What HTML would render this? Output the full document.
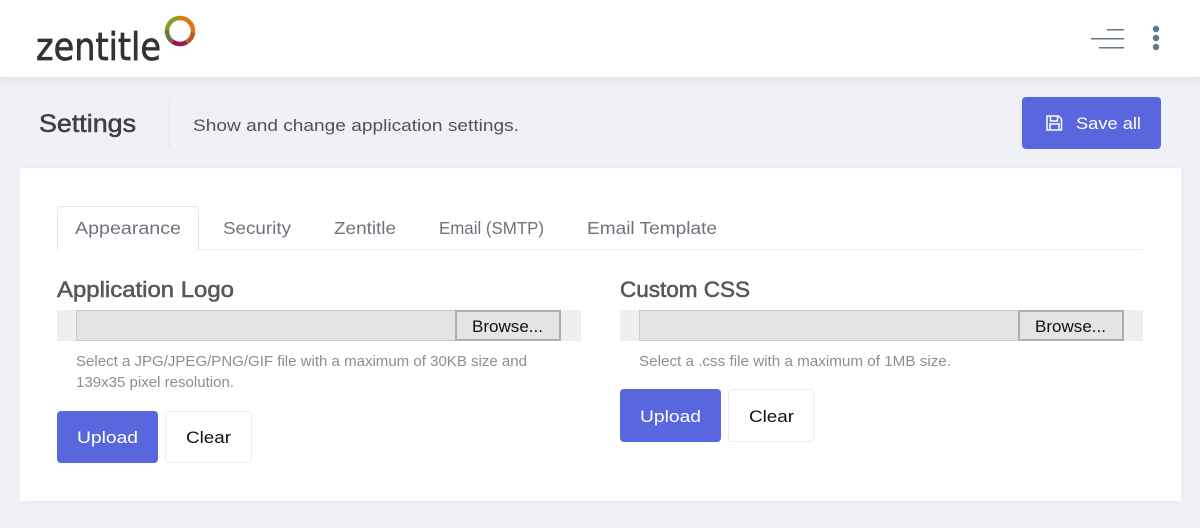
<!DOCTYPE html>
<html lang="en"><head><meta charset="utf-8"><title>Settings</title>
<style>
html,body{margin:0;padding:0;width:1200px;height:528px;overflow:hidden;background:#f0f1f7;font-family:"Liberation Sans",sans-serif}
div{position:absolute;box-sizing:border-box}
svg{position:absolute;left:0;top:0}
</style></head><body>
<div style="left:0;top:0;width:1200px;height:77px;background:#fff;box-shadow:0 1px 10px rgba(60,60,90,.13)"></div>
<div style="left:169px;top:98px;width:1px;height:50px;background:#e2e3ea"></div>
<div style="left:1022px;top:97px;width:139px;height:52px;background:#5867dd;border-radius:4px"></div>
<div style="left:20px;top:168px;width:1161px;height:333px;background:#fff;box-shadow:0 0 8px rgba(80,80,120,.04)"></div>
<div style="left:57px;top:249px;width:1086px;height:1px;background:#ebedf2"></div>
<div style="left:57px;top:206px;width:142px;height:44px;background:#fff;border:1px solid #e3e6ee;border-bottom:0;border-radius:4px 4px 0 0"></div>

<div style="left:57px;top:310px;width:524px;height:31px;background:#efefef"></div>
<div style="left:76px;top:310px;width:380px;height:31px;background:#e3e3e3;border:1px solid #c9c9c9;border-right:0"></div>
<div style="left:455px;top:310px;width:106px;height:31px;background:#e4e4e4;border:2px solid #adadad"></div>

<div style="left:620px;top:310px;width:523px;height:31px;background:#efefef"></div>
<div style="left:639px;top:310px;width:380px;height:31px;background:#e3e3e3;border:1px solid #c9c9c9;border-right:0"></div>
<div style="left:1018px;top:310px;width:106px;height:31px;background:#e4e4e4;border:2px solid #adadad"></div>

<div style="left:57px;top:411px;width:101px;height:52px;background:#5867dd;border-radius:4px"></div>
<div style="left:165px;top:411px;width:87px;height:52px;background:#fff;border:1px solid #ebedf2;border-radius:4px"></div>
<div style="left:620px;top:389px;width:101px;height:53px;background:#5867dd;border-radius:4px"></div>
<div style="left:728px;top:389px;width:86px;height:53px;background:#fff;border:1px solid #ebedf2;border-radius:4px"></div>

<svg width="1200" height="528" viewBox="0 0 1200 528" font-family="'Liberation Sans',sans-serif">
  <!-- logo -->
  <text x="36" y="60" font-family="'DejaVu Sans',sans-serif" font-size="38.500" fill="#333336" stroke="#333336" stroke-width=".7" textLength="125" lengthAdjust="spacingAndGlyphs">zentitle</text>
  <g fill="none" stroke-width="4.500">
    <path d="M167.050 29.870A13 13 0 0 1 177.740 18.200" stroke="#8f9a24"/>
    <path d="M177.740 18.200A13 13 0 0 1 192.950 32.130" stroke="#dd7c0c"/>
    <path d="M192.950 32.130A13 13 0 0 1 186.500 42.260" stroke="#bd5a1c"/>
    <path d="M186.500 42.260A13 13 0 0 1 172.540 41.650" stroke="#a3144e"/>
    <path d="M172.540 41.650A13 13 0 0 1 167.050 29.870" stroke="#66763e"/>
  </g>
  <!-- header icons -->
  <g fill="#62768a">
    <rect x="1107" y="29" width="17" height="1.500"/>
    <rect x="1091" y="38" width="33" height="1.500"/>
    <rect x="1099" y="47" width="25" height="1.500"/>
  </g>
  <g fill="#5f7890">
    <circle cx="1156" cy="29" r="3.200"/>
    <circle cx="1156" cy="38" r="3.200"/>
    <circle cx="1156" cy="47" r="3.200"/>
  </g>
  <!-- page heading -->
  <text x="39" y="132" font-size="25" fill="#3f4047" stroke="#3f4047" stroke-width=".55" textLength="97" lengthAdjust="spacingAndGlyphs">Settings</text>
  <text x="193" y="131" font-size="17" fill="#50505e" textLength="326" lengthAdjust="spacingAndGlyphs">Show and change application settings.</text>
  <!-- save -->
  <path d="M1047 116h11.500l3 3v11h-14.500zM1050.500 116.500v4.500h7v-4.500M1050 130v-6h9v6" fill="none" stroke="#fff" stroke-width="1.500"/>
  <text x="1076" y="129" font-size="17" fill="#fff" textLength="65" lengthAdjust="spacingAndGlyphs">Save all</text>
  <!-- tabs -->
  <g font-size="17.500" fill="#6f727d">
    <text x="75" y="234" textLength="106" lengthAdjust="spacingAndGlyphs">Appearance</text>
    <text x="223" y="234" textLength="68" lengthAdjust="spacingAndGlyphs">Security</text>
    <text x="334" y="234" textLength="62" lengthAdjust="spacingAndGlyphs">Zentitle</text>
    <text x="439" y="234" textLength="105" lengthAdjust="spacingAndGlyphs">Email (SMTP)</text>
    <text x="587" y="234" textLength="130" lengthAdjust="spacingAndGlyphs">Email Template</text>
  </g>
  <!-- section titles -->
  <g font-size="22" fill="#5a5659" stroke="#5a5659" stroke-width=".55">
    <text x="57" y="297" textLength="177" lengthAdjust="spacingAndGlyphs">Application Logo</text>
    <text x="620" y="297" textLength="130" lengthAdjust="spacingAndGlyphs">Custom CSS</text>
  </g>
  <!-- browse -->
  <g font-size="16.500" fill="#111">
    <text x="472" y="332" textLength="71" lengthAdjust="spacingAndGlyphs">Browse...</text>
    <text x="1035" y="332" textLength="71" lengthAdjust="spacingAndGlyphs">Browse...</text>
  </g>
  <!-- help -->
  <g font-size="14.500" fill="#8c8e96">
    <text x="76" y="366" textLength="451" lengthAdjust="spacingAndGlyphs">Select a JPG/JPEG/PNG/GIF file with a maximum of 30KB size and</text>
    <text x="76" y="387" textLength="158" lengthAdjust="spacingAndGlyphs">139x35 pixel resolution.</text>
    <text x="639" y="366" textLength="312" lengthAdjust="spacingAndGlyphs">Select a .css file with a maximum of 1MB size.</text>
  </g>
  <!-- buttons -->
  <g font-size="17">
    <text x="77" y="443" fill="#fff" textLength="61" lengthAdjust="spacingAndGlyphs">Upload</text>
    <text x="186" y="443" fill="#111" textLength="45" lengthAdjust="spacingAndGlyphs">Clear</text>
    <text x="640" y="422" fill="#fff" textLength="61" lengthAdjust="spacingAndGlyphs">Upload</text>
    <text x="749" y="422" fill="#111" textLength="45" lengthAdjust="spacingAndGlyphs">Clear</text>
  </g>
</svg>
</body></html>
